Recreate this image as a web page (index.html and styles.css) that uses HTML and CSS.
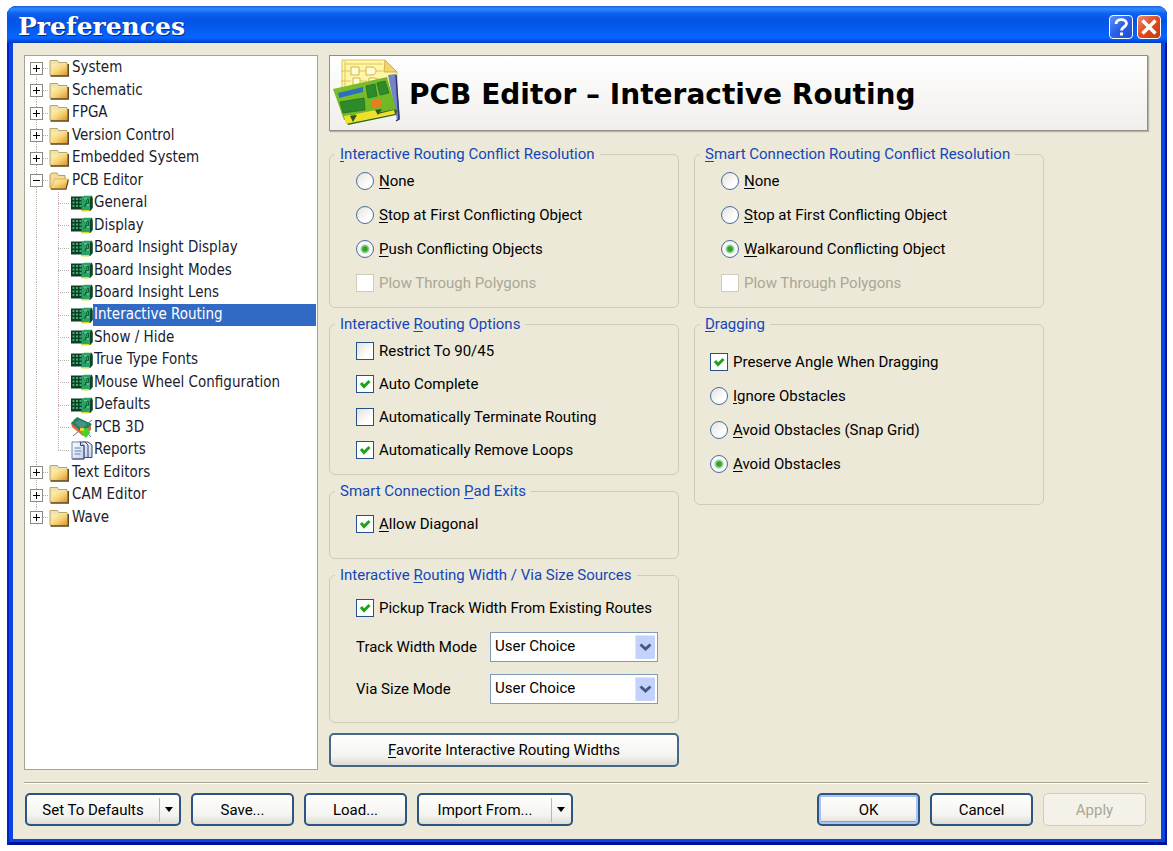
FILE: index.html
```html
<!DOCTYPE html>
<html lang="en">
<head>
<meta charset="utf-8">
<title>Preferences</title>
<link rel="stylesheet" href="styles.css">
</head>
<body>
<svg class="defs" width="0" height="0" aria-hidden="true">
  <defs>
    <linearGradient id="gold" x1="0" y1="0" x2="1" y2="1">
      <stop offset="0" stop-color="#fff3b8"/><stop offset=".5" stop-color="#f7d275"/><stop offset="1" stop-color="#d9932a"/>
    </linearGradient>
    <linearGradient id="paper" x1="0" y1="0" x2="1" y2="1">
      <stop offset="0" stop-color="#ffffff"/><stop offset="1" stop-color="#c3d2ea"/>
    </linearGradient>
    <linearGradient id="board" x1="0" y1="0" x2="1" y2="1">
      <stop offset="0" stop-color="#7cc02c"/><stop offset="1" stop-color="#6cb524"/>
    </linearGradient>
    <symbol id="folder" viewBox="0 0 20 18">
      <path d="M1 16V1.500h7.500l1 2H18V16z" fill="#efe3ad" stroke="#b8a766"/>
      <path d="M3 5.500h15.500V16.500H3z" fill="url(#gold)"/>
      <path d="M1.500 17H19.200V5" fill="none" stroke="#5a431c" stroke-width="1.500"/>
    </symbol>
    <symbol id="folder-open" viewBox="0 0 20 18">
      <path d="M1 16V2.500L3 1h5l1.500 2.500H16V16z" fill="#f3dc98" stroke="#b89b58"/>
      <path d="M1.500 16.500L6 7h13.500L17 16.500z" fill="url(#gold)" stroke="#d8a94a" stroke-width=".8"/>
      <path d="M2 17.200H17L19.300 8" fill="none" stroke="#6a4a1c" stroke-width="1.200"/>
    </symbol>
    <symbol id="pcb" viewBox="0 0 22 17">
      <path d="M0 1.500h12V14.500H0z" fill="#0d3e22"/>
      <path d="M1.500 3h2v2h-2zM5 3h2v2H5zM8.500 3h2v2h-2zM1.500 6.500h2v2h-2zM5 6.500h2v2H5zM8.500 6.500h2v2h-2zM1.500 10h2v2h-2zM5 10h2v2H5zM8.500 10h2v2h-2z" fill="#3cae76"/>
      <path d="M10.500 2.500L13 .7h8v13L19 16h-8.500z" fill="#2aa265"/>
      <path d="M21 .7l.8 3V13L19 16V3z" fill="#0c4527"/>
      <path d="M12.500 4.500h5v4h-3v2.500h-2M15.500 5.500v2" fill="none" stroke="#0f5f38"/>
      <path d="M13 4h3M16 10h2" stroke="#8ee0b0"/>
      <path d="M11 15h7v1.500h-7z" fill="#d9dc2e"/>
    </symbol>
    <symbol id="pcb3d" viewBox="0 0 22 21">
      <path d="M2 19L21 3M3 2l17 18" stroke="#6670a8" fill="none"/>
      <path d="M0 6l1 4 11 9 8-6V8z" fill="#e0673d"/>
      <path d="M0 6l6-6 15 7-9 9z" fill="#238262"/>
      <path d="M4 6l4-3 8 4-5 5z" fill="#4a9182"/>
      <path d="M9 12l8-1 2 5-4 5-4-4z" fill="#43d32b"/>
      <path d="M9 11h4v3H9z" fill="#f0cf28"/>
    </symbol>
    <symbol id="report" viewBox="0 0 22 20">
      <path d="M12 1.500h5l4 3V17h-9z" fill="url(#paper)" stroke="#38477e"/>
      <path d="M8 1.500h6l3 3V17H8z" fill="url(#paper)" stroke="#38477e"/>
      <path d="M1 1.500h8.500l3.500 3.500V18.500H1z" fill="url(#paper)" stroke="#7585ab"/>
      <path d="M9.500 1.500V5H13V18.500H1.500" fill="none" stroke="#35457b"/>
      <path d="M3.500 7.500h6M3.500 10.500h7M3.500 13.500h6" stroke="#6d7fb4"/>
    </symbol>
    <symbol id="down" viewBox="0 0 8 5"><path d="M0 0h8L4 5z" fill="currentColor"/></symbol>
    <symbol id="chevron" viewBox="0 0 20 24">
      <rect width="20" height="24" rx="2" fill="#c3d2fb"/>
      <path d="M.5 23V1.500M.5.500H19" stroke="#dde6ff" fill="none"/>
      <path d="M5.500 9.500L10.500 14l5-4.500" fill="none" stroke="#435a88" stroke-width="3"/>
    </symbol>
  </defs>
</svg>

<main class="window">
  <header class="titlebar">
    <h1 class="title">Preferences</h1>
    <button class="cap cap-help" type="button" aria-label="Help">
      <svg viewBox="0 0 22 22" aria-hidden="true"><path d="M6 8c0-6 10.500-5.500 10.500-.5 0 3.500-5 3.500-5 7" fill="none" stroke="#fff" stroke-width="2.800"/><path d="M10 16.500h3v3h-3z" fill="#fff"/></svg>
    </button>
    <button class="cap cap-close" type="button" aria-label="Close">
      <svg viewBox="0 0 22 22" aria-hidden="true"><path d="M4.500 4.500l13 13M17.500 4.500l-13 13" stroke="#fff" stroke-width="3.500"/></svg>
    </button>
  </header>

  <div class="client">
    <div class="body">
      <nav class="tree-pane" aria-label="Preference pages">
        <ul class="tree">
          <li class="node first"><span class="toggle"><span class="box plus"></span></span><svg class="folder"><use href="#folder"/></svg><span class="name">System</span></li>
          <li class="node"><span class="toggle"><span class="box plus"></span></span><svg class="folder"><use href="#folder"/></svg><span class="name">Schematic</span></li>
          <li class="node"><span class="toggle"><span class="box plus"></span></span><svg class="folder"><use href="#folder"/></svg><span class="name">FPGA</span></li>
          <li class="node"><span class="toggle"><span class="box plus"></span></span><svg class="folder"><use href="#folder"/></svg><span class="name">Version Control</span></li>
          <li class="node"><span class="toggle"><span class="box plus"></span></span><svg class="folder"><use href="#folder"/></svg><span class="name">Embedded System</span></li>
          <li class="node"><span class="toggle"><span class="box"></span></span><svg class="folder"><use href="#folder-open"/></svg><span class="name">PCB Editor</span></li>
          <li class="node leaf"><span class="rail"></span><span class="branch"></span><svg class="page"><use href="#pcb"/></svg><span class="name">General</span></li>
          <li class="node leaf"><span class="rail"></span><span class="branch"></span><svg class="page"><use href="#pcb"/></svg><span class="name">Display</span></li>
          <li class="node leaf"><span class="rail"></span><span class="branch"></span><svg class="page"><use href="#pcb"/></svg><span class="name">Board Insight Display</span></li>
          <li class="node leaf"><span class="rail"></span><span class="branch"></span><svg class="page"><use href="#pcb"/></svg><span class="name">Board Insight Modes</span></li>
          <li class="node leaf"><span class="rail"></span><span class="branch"></span><svg class="page"><use href="#pcb"/></svg><span class="name">Board Insight Lens</span></li>
          <li class="node leaf selected" aria-current="page"><span class="rail"></span><span class="branch"></span><svg class="page"><use href="#pcb"/></svg><span class="name">Interactive Routing</span></li>
          <li class="node leaf"><span class="rail"></span><span class="branch"></span><svg class="page"><use href="#pcb"/></svg><span class="name">Show / Hide</span></li>
          <li class="node leaf"><span class="rail"></span><span class="branch"></span><svg class="page"><use href="#pcb"/></svg><span class="name">True Type Fonts</span></li>
          <li class="node leaf"><span class="rail"></span><span class="branch"></span><svg class="page"><use href="#pcb"/></svg><span class="name">Mouse Wheel Configuration</span></li>
          <li class="node leaf"><span class="rail"></span><span class="branch"></span><svg class="page"><use href="#pcb"/></svg><span class="name">Defaults</span></li>
          <li class="node leaf"><span class="rail"></span><span class="branch"></span><svg class="page tall"><use href="#pcb3d"/></svg><span class="name">PCB 3D</span></li>
          <li class="node leaf"><span class="rail"></span><span class="branch end"></span><svg class="page tall"><use href="#report"/></svg><span class="name">Reports</span></li>
          <li class="node"><span class="toggle"><span class="box plus"></span></span><svg class="folder"><use href="#folder"/></svg><span class="name">Text Editors</span></li>
          <li class="node"><span class="toggle"><span class="box plus"></span></span><svg class="folder"><use href="#folder"/></svg><span class="name">CAM Editor</span></li>
          <li class="node last"><span class="toggle"><span class="box plus"></span></span><svg class="folder"><use href="#folder"/></svg><span class="name">Wave</span></li>
        </ul>
      </nav>

      <section class="page-pane">
        <header class="banner">
          <svg class="banner-icon" viewBox="0 0 68 68" aria-hidden="true">
            <path d="M9 1h43l12 12v42H9z" fill="#fff6a8" stroke="#dfc653"/>
            <path d="M52 1l-1 12h13z" fill="#f3d566" stroke="#c5a740" stroke-width=".8"/>
            <path d="M12 5h38M8 12h9m9 0h7m9 0h8M8 22h10m8 0h8m11 0h7M12 2v26" fill="none" stroke="#dcc75a"/>
            <path d="M18 8h8v8h-8zM33 8h5q5 0 5 4t-5 4h-5zM20 19h7v7h-7zM36 19h5q5 0 5 4t-5 4h-5z" fill="#fffbd2" stroke="#cdb548"/>
            <path d="M55 16l8-1 4 45-3 1z" fill="#7584c5"/>
            <path d="M63 16l3 44-3 2" fill="none" stroke="#2e3972" stroke-width="1.500"/>
            <path d="M0 31l4 3 9 28 2 4 48-10 1-5z" fill="#31641b"/>
            <path d="M0 30l54-12 9 32-52 11z" fill="url(#board)"/>
            <path d="M5 34l25-6v5L6 39z" fill="#2d6fc0"/>
            <path d="M33 27l9-2 2 12-9 2zM44 24l8-2 4 12-9 2zM7 43l24-4 1 12-22 3z" fill="#2e8b2c" stroke="#20671e" stroke-width=".7"/>
            <path d="M38 42l10-2 1 7-10 2z" fill="#f07a1c"/>
            <path d="M11 57l6-1 3 4 3-5 20-4 2 4 16-4 1 4-49 10z" fill="#efe02e"/>
            <path d="M17 57l3 6 4-7M42 51l3 5 4-6" fill="#2b5b1c"/>
          </svg>
          <h2 class="banner-title">PCB Editor – Interactive Routing</h2>
        </header>

        <div class="columns">
          <div class="column">
            <fieldset class="group">
              <legend><u>I</u>nteractive Routing Conflict Resolution</legend>
              <label class="option"><input type="radio" name="conflict"><span><u>N</u>one</span></label>
              <label class="option"><input type="radio" name="conflict"><span><u>S</u>top at First Conflicting Object</span></label>
              <label class="option"><input type="radio" name="conflict" checked><span><u>P</u>ush Conflicting Objects</span></label>
              <label class="option"><input type="checkbox" disabled><span>Plow Through Polygons</span></label>
            </fieldset>

            <fieldset class="group tight">
              <legend>Interactive <u>R</u>outing Options</legend>
              <label class="option"><input type="checkbox"><span>Restrict To 90/45</span></label>
              <label class="option"><input type="checkbox" checked><span>Auto Complete</span></label>
              <label class="option"><input type="checkbox"><span>Automatically Terminate Routing</span></label>
              <label class="option"><input type="checkbox" checked><span>Automatically Remove Loops</span></label>
            </fieldset>

            <fieldset class="group exits">
              <legend>Smart Connection <u>P</u>ad Exits</legend>
              <label class="option"><input type="checkbox" checked><span><u>A</u>llow Diagonal</span></label>
            </fieldset>

            <fieldset class="group sources">
              <legend>Interactive <u>R</u>outing Width / Via Size Sources</legend>
              <label class="option"><input type="checkbox" checked><span>Pickup Track Width From Existing Routes</span></label>
              <div class="fields">
                <label for="track">Track Width Mode</label>
                <div class="combo"><select id="track"><option>User Choice</option></select><svg aria-hidden="true"><use href="#chevron"/></svg></div>
                <label for="via">Via Size Mode</label>
                <div class="combo"><select id="via"><option>User Choice</option></select><svg aria-hidden="true"><use href="#chevron"/></svg></div>
              </div>
            </fieldset>

            <button class="button favorite" type="button"><u>F</u>avorite Interactive Routing Widths</button>
          </div>

          <div class="column">
            <fieldset class="group">
              <legend><u>S</u>mart Connection Routing Conflict Resolution</legend>
              <label class="option"><input type="radio" name="smart"><span><u>N</u>one</span></label>
              <label class="option"><input type="radio" name="smart"><span><u>S</u>top at First Conflicting Object</span></label>
              <label class="option"><input type="radio" name="smart" checked><span><u>W</u>alkaround Conflicting Object</span></label>
              <label class="option"><input type="checkbox" disabled><span>Plow Through Polygons</span></label>
            </fieldset>

            <fieldset class="group dragging">
              <legend><u>D</u>ragging</legend>
              <label class="option"><input type="checkbox" checked><span>Preserve Angle When Dragging</span></label>
              <label class="option"><input type="radio" name="drag"><span><u>I</u>gnore Obstacles</span></label>
              <label class="option"><input type="radio" name="drag"><span><u>A</u>void Obstacles (Snap Grid)</span></label>
              <label class="option"><input type="radio" name="drag" checked><span><u>A</u>void Obstacles</span></label>
            </fieldset>
          </div>
        </div>
      </section>
    </div>

    <footer class="footer">
      <div class="actions">
        <div class="button split"><button class="split-main" type="button">Set To Defaults</button><button class="split-arrow" type="button" aria-label="More defaults"><svg aria-hidden="true"><use href="#down"/></svg></button></div>
        <button class="button" type="button">Save...</button>
        <button class="button" type="button">Load...</button>
        <div class="button split"><button class="split-main" type="button">Import From...</button><button class="split-arrow" type="button" aria-label="More import sources"><svg aria-hidden="true"><use href="#down"/></svg></button></div>
      </div>
      <div class="actions">
        <button class="button primary" type="button">OK</button>
        <button class="button" type="button">Cancel</button>
        <button class="button" type="button" disabled>Apply</button>
      </div>
    </footer>
  </div>
</main>
</body>
</html>
```
FILE: styles.css
```css
* { box-sizing: border-box; }

body {
  margin: 0;
  padding: 6px 6px 6px 7px;
  min-height: 100vh;
  display: flex;
  background: #fff;
  color: #000;
  font: 15px/18px Roboto, "Liberation Sans", sans-serif;
}

.defs { position: absolute; }

button, select, input { font: inherit; color: inherit; margin: 0; }

/* Window frame */
.window {
  flex: 1;
  min-width: 0;
  display: flex;
  flex-direction: column;
  border-radius: 9px 9px 0 0;
  padding: 0 6px 6px;
  background: #0a46e0;
  box-shadow: inset 2px 0 #0020c8, inset -2px -3px #00129c;
}

.titlebar {
  display: flex;
  align-items: center;
  gap: 4px;
  height: 37px;
  margin: 0 -6px;
  padding: 4px 6px 0 11px;
  border-radius: 9px 9px 0 0;
  background: linear-gradient(#1a62e0 0, #2f8bff 3px, #0f62f2 7px, #0453e4 14px, #0560f5 27px, #0664ff 32px, #0045d2 36px, #003cc0 37px);
}

.title {
  flex: 1;
  margin: 0;
  color: #fff;
  font: bold 25px/28px "DejaVu Serif", serif;
  text-shadow: 1px 1px #0a2a88;
}

.cap {
  width: 24px;
  height: 24px;
  padding: 0;
  border: 1px solid #fff;
  border-radius: 4px;
}
.cap svg { display: block; width: 22px; height: 22px; }
.cap-help { background: linear-gradient(135deg, #5d92f8, #2a5fe6 50%, #1c4fd8); }
.cap-close { background: linear-gradient(135deg, #ee8a6c, #dd4a22 50%, #c53a10); }

.client {
  flex: 1;
  display: flex;
  flex-direction: column;
  padding: 12px 13px 13px 11px;
  background: #ece9d8;
}

.body {
  flex: 1;
  display: flex;
  gap: 11px;
  padding-bottom: 12px;
  border-bottom: 1px solid #a6a393;
  box-shadow: 0 1px #fff;
}

/* Tree */
.tree-pane {
  width: 294px;
  flex: none;
  border: 1px solid #a5a397;
  background: #fff;
  font: 15px/18px "DejaVu Sans Condensed", "DejaVu Sans", sans-serif;
  font-stretch: condensed;
}

.tree {
  display: grid;
  grid-auto-rows: 1fr;
  height: 473px;
  margin: 0;
  padding: 1px 1px 0 5px;
  list-style: none;
}

.node { display: flex; align-items: center; min-height: 0; color: #1c1c2c; }

.toggle, .rail, .branch {
  align-self: stretch;
  flex: none;
  background-repeat: no-repeat;
}
.toggle {
  display: flex;
  align-items: center;
  width: 19px;
  background-image:
    repeating-linear-gradient(#b5b2a8 0 1px, transparent 1px 2px),
    repeating-linear-gradient(90deg, #b5b2a8 0 1px, transparent 1px 2px);
  background-size: 1px 100%, 12px 1px;
  background-position: 6px 0, 7px 50%;
}
.first .toggle { background-size: 1px 50%, 12px 1px; background-position: 6px 100%, 7px 50%; }
.last .toggle { background-size: 1px 50%, 12px 1px; }

.box {
  width: 13px;
  height: 13px;
  border: 1px solid #8c8a80;
  background: linear-gradient(#000, #000) center / 7px 1px no-repeat, #fff;
}
.plus {
  background:
    linear-gradient(#000, #000) center / 7px 1px no-repeat,
    linear-gradient(#000, #000) center / 1px 7px no-repeat,
    #fff;
}

.rail {
  width: 28px;
  background-image: repeating-linear-gradient(#b5b2a8 0 1px, transparent 1px 2px);
  background-size: 1px 100%;
  background-position: 6px 0;
}
.branch {
  width: 13px;
  background-image:
    repeating-linear-gradient(#c3aab0 0 1px, transparent 1px 2px),
    repeating-linear-gradient(90deg, #b5b2a8 0 1px, transparent 1px 2px);
  background-size: 1px 100%, 12px 1px;
  background-position: 0 0, 0 50%;
}
.branch.end { background-size: 1px 50%, 12px 1px; }

.folder { width: 20px; height: 18px; flex: none; }
.page { width: 22px; height: 17px; flex: none; }
.page.tall { height: 21px; }

.name { flex: 1; padding: 1px 0 3px 3px; white-space: nowrap; }
.leaf .name { padding-left: 1px; }
.selected .name { background: #316ac5; color: #fff; }

/* Page */
.page-pane { flex: 1; min-width: 0; }

.banner {
  display: flex;
  align-items: center;
  gap: 8px;
  height: 76px;
  padding: 0 3px;
  border: 1px solid #8f8e88;
  box-shadow: 1px 1px 1px #b5b3a8;
  background: linear-gradient(#fff, #f1efec);
}
.banner-icon { width: 68px; height: 68px; flex: none; }
.banner-title {
  margin: 0;
  padding-top: 4px;
  font: bold 28px/34px "DejaVu Sans", sans-serif;
  white-space: nowrap;
}

.columns {
  display: grid;
  grid-template-columns: repeat(2, minmax(0, 350px));
  gap: 15px;
  padding-top: 14px;
}
.column { display: flex; flex-direction: column; gap: 7px; }

.group {
  display: flex;
  flex-direction: column;
  gap: 16px;
  min-width: 0;
  margin: 0;
  padding: 9px 20px 15px 26px;
  border: 1px solid #cfccba;
  border-radius: 6px;
}
.group legend {
  margin-left: -21px;
  padding: 0 5px;
  color: #1446b8;
  white-space: nowrap;
}
.tight { gap: 15px; }
.exits { padding-top: 15px; padding-bottom: 25px; }
.sources { gap: 15px; padding-top: 15px; padding-bottom: 18px; }
.dragging { padding-top: 20px; padding-bottom: 31px; padding-left: 15px; }
.dragging legend { margin-left: -10px; }

u { text-underline-offset: 2px; text-decoration-thickness: 1px; }

.option { display: flex; align-items: center; gap: 5px; height: 18px; white-space: nowrap; }

.option input {
  appearance: none;
  width: 18px;
  height: 18px;
  flex: none;
  border: 1px solid #24518a;
  background: linear-gradient(135deg, #e3e1da, #fff 70%);
}
.option input[type="radio"] { border-radius: 50%; border-color: #4a6c98; }
.option input[type="radio"]:checked {
  background: radial-gradient(circle at center, #2ea52a 0 2px, #a9d8a5 4px, #f8f8f6 5px);
}
.option input[type="checkbox"]:checked {
  background: #fff url("data:image/svg+xml,%3Csvg xmlns='http://www.w3.org/2000/svg' viewBox='0 0 16 16'%3E%3Cpath d='M4 7l3 3.500L12.500 5' fill='none' stroke='%2321a121' stroke-width='3'/%3E%3C/svg%3E");
}
.option input:disabled { border-color: #cfccba; background: #fff; }
.option input:disabled + span { color: #a9a796; }

.fields {
  display: grid;
  grid-template-columns: 134px 1fr;
  row-gap: 12px;
  align-items: center;
}

.combo { display: grid; grid-template-columns: 1fr 20px; height: 30px; align-items: center; }
.combo select {
  grid-area: 1 / 1 / 2 / 3;
  appearance: none;
  width: 100%;
  height: 30px;
  padding: 0 24px 2px 4px;
  border: 1px solid #7f9db9;
  border-radius: 0;
  background: #fff;
}
.combo svg {
  grid-area: 1 / 2;
  width: 20px;
  height: 24px;
  margin-left: -3px;
  pointer-events: none;
  z-index: 1;
}

/* Buttons */
.button {
  width: 103px;
  height: 33px;
  padding: 0;
  border: 2px solid #2b5582;
  border-radius: 5px;
  background: linear-gradient(#fff, #f4f3ee 70%, #dedbd0);
}
.favorite { width: 100%; height: 34px; margin-top: 3px; border-color: #466788; }
.primary { box-shadow: inset 0 0 0 2px #a9c4f4, inset 0 -3px #7c9ee4; }
.button:disabled { border: 1px solid #cfccba; background: #f3f1e8; color: #a9a796; }

.split { display: flex; width: 156px; }
.split button { height: 100%; padding: 0; border: 0; background: none; }
.split .split-main { flex: 1; }
.split .split-arrow {
  display: grid;
  place-items: center;
  width: 20px;
  background: linear-gradient(#b9b7ad, #b9b7ad) left center / 1px 24px no-repeat;
}
.split-arrow svg { width: 8px; height: 5px; }

.footer {
  display: flex;
  justify-content: space-between;
  padding: 10px 2px 0 1px;
}
.actions { display: flex; gap: 10px; }
```
